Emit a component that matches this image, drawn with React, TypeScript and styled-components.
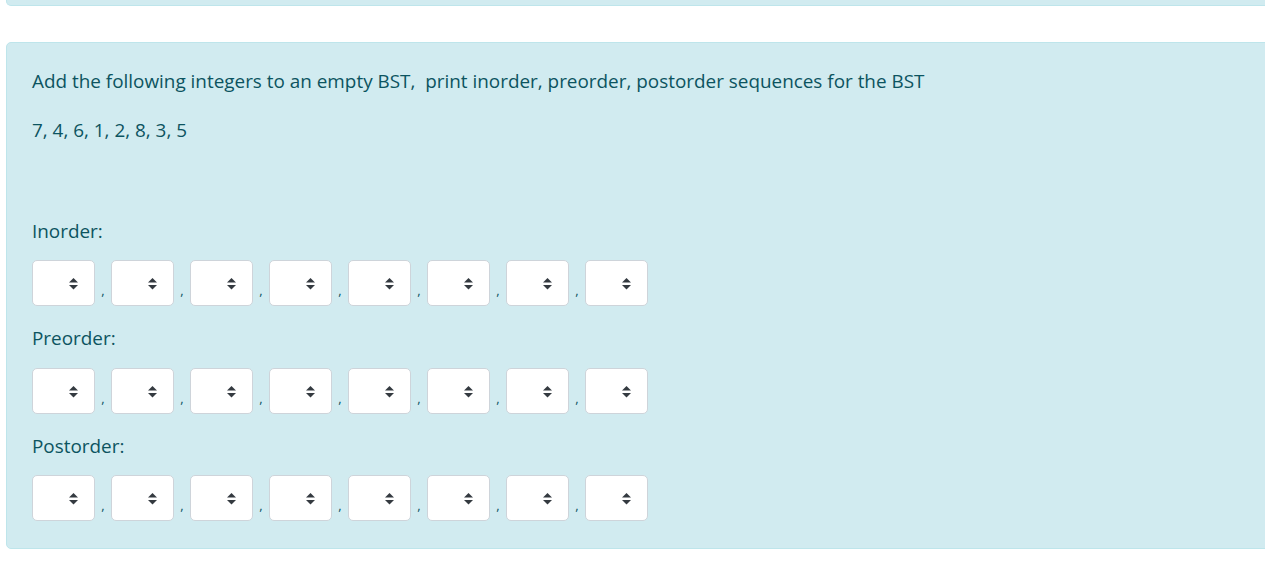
import styled, { createGlobalStyle } from "styled-components";

const GlobalStyle = createGlobalStyle`
    html, body {
        margin: 0;
        padding: 0;
        background: #ffffff;
        overflow: hidden;
    }
    body {
        font-family: "Open Sans", "Noto Sans", "Liberation Sans", sans-serif;
        color: #0c5460;
    }
`

const Pagina = styled.div`
    display: flex;
    flex-direction: column;
    gap: 36px;
    padding-left: 6px;
    width: 1320px;
`

const CaixaAnterior = styled.div`
    height: 5px;
    background: #d1ebf0;
    border: 1px solid #bee5eb;
    border-top: none;
    border-radius: 0 0 5px 5px;
`

const Caixa = styled.div`
    background: #d1ebf0;
    border: 1px solid #bee5eb;
    border-radius: 5px;
    padding: 24px 25px 27px;
    display: flex;
    flex-direction: column;
`

const Paragrafo = styled.p<{ $espaco: number }>`
    margin: 0 0 ${p => p.$espaco}px;
    font-size: 18.9px;
    line-height: 28px;
    white-space: pre;
`

const Rotulo = styled.div<{ $espaco: number }>`
    font-size: 18.9px;
    line-height: 28px;
    margin-bottom: ${p => p.$espaco}px;
`

const Linha = styled.div<{ $espaco: number }>`
    display: flex;
    align-items: flex-end;
    margin-bottom: ${p => p.$espaco}px;
`

const Seletor = styled.div`
    width: 63px;
    height: 46px;
    box-sizing: border-box;
    background: #ffffff;
    border: 1px solid #ced4da;
    border-radius: 5px;
    display: flex;
    align-items: center;
    justify-content: flex-end;
    padding-right: 15px;
`

const Virgula = styled.span`
    width: 16px;
    text-align: center;
    font-size: 13px;
    line-height: 13px;
    padding-bottom: 9px;
    color: #0c5460;
`

function Setas() {
    return (
        <svg width="11" height="13" viewBox="0 0 11 13">
            <polygon points="1,5.5 5.5,1 10,5.5" fill="#343a40" />
            <polygon points="1,8 10,8 5.5,12.5" fill="#343a40" />
        </svg>
    )
}

function LinhaSeletores({ espaco }: { espaco: number }) {
    const itens = Array.from({ length: 8 }, (_, i) => i)
    return (
        <Linha $espaco={espaco}>
            {itens.map(i => [
                <Seletor key={'s' + i}><Setas /></Seletor>,
                i < itens.length - 1 ? <Virgula key={'v' + i}>,</Virgula> : null,
            ])}
        </Linha>
    )
}

export default function App() {
    return (
        <>
            <GlobalStyle />
            <Pagina>
                <CaixaAnterior />
                <Caixa>
                    <Paragrafo $espaco={21}>Add the following integers to an empty BST,  print inorder, preorder, postorder sequences for the BST</Paragrafo>
                    <Paragrafo $espaco={73}>7, 4, 6, 1, 2, 8, 3, 5</Paragrafo>
                    <Rotulo $espaco={15}>Inorder:</Rotulo>
                    <LinhaSeletores espaco={18} />
                    <Rotulo $espaco={16}>Preorder:</Rotulo>
                    <LinhaSeletores espaco={18} />
                    <Rotulo $espaco={15}>Postorder:</Rotulo>
                    <LinhaSeletores espaco={0} />
                </Caixa>
            </Pagina>
        </>
    )
}
